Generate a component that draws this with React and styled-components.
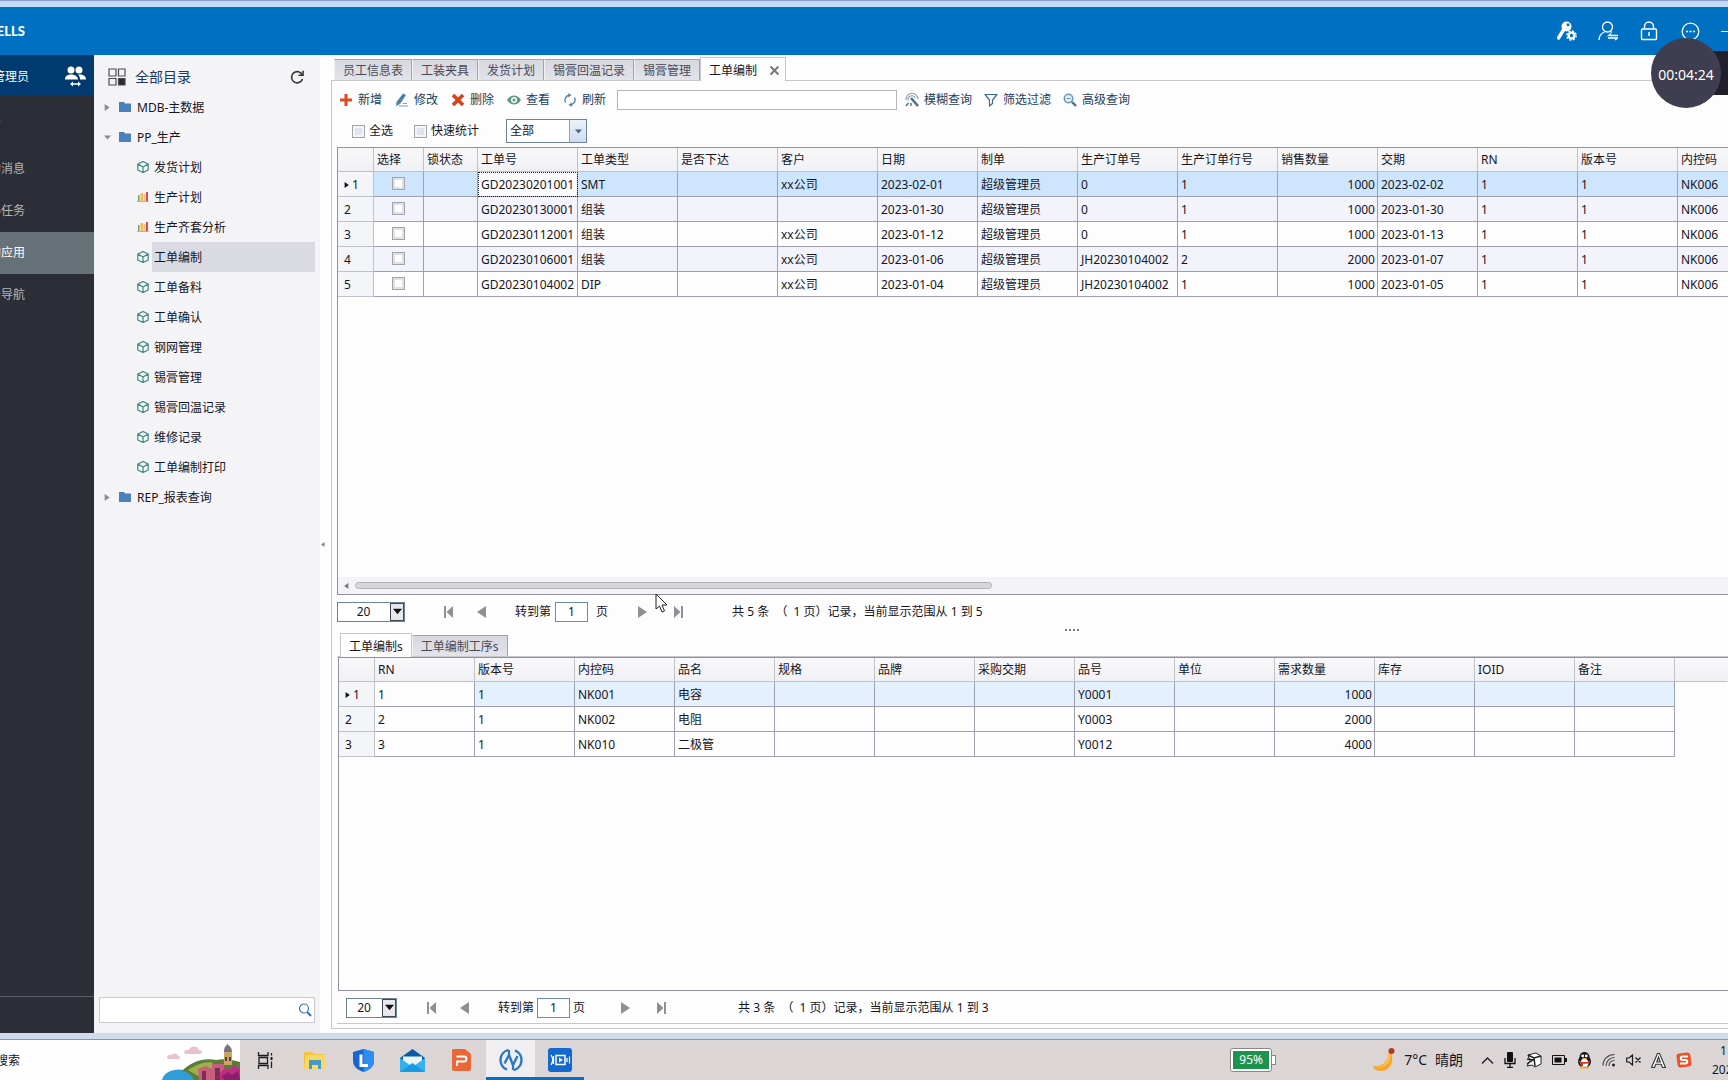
import React from "react";
import styled, { createGlobalStyle, css } from "styled-components";

const GlobalStyle = createGlobalStyle`
  *, *::before, *::after { box-sizing: border-box; }
  body {
    margin: 0;
    overflow: hidden;
    background: #fdfdfd;
    color: #15151f;
    font: 12px/16px "Noto Sans", "Noto Sans CJK SC", sans-serif;
  }
  button, input, select { font: inherit; color: inherit; margin: 0; }
  button { border: 0; padding: 0; background: none; cursor: pointer; }
  a { color: inherit; text-decoration: none; }
  svg { display: block; flex: none; }
`;

const Screen = styled.div`
  display: flex;
  flex-direction: column;
  height: 100vh;
  overflow: hidden;
`;

/* ---------- title bar ---------- */
const WindowEdge = styled.div`
  flex: none;
  height: 7px;
  background: #c4dbf7;
  border-top: 1px solid #8e9ac4;
`;
const TitleBar = styled.header`
  flex: none;
  display: flex;
  align-items: center;
  justify-content: space-between;
  height: 48px;
  background: #0070c3;
  color: #fff;
`;
const Brand = styled.strong`
  display: flex;
  justify-content: flex-end;
  width: 25px;
  overflow: hidden;
  font: 900 13px/20px Lato, "Liberation Sans", sans-serif;
`;
const TitleActions = styled.div`
  display: flex;
  align-items: center;
  gap: 21px;
  margin-right: -13px;
  button { width: 20px; height: 22px; display: grid; place-items: center; color: #fff; }
`;
const TimerDock = styled.div`
  position: absolute;
  top: 38px;
  right: 0;
  width: 77px;
  height: 70px;
  display: flex;
  align-items: center;
  &::before {
    content: "";
    position: absolute;
    right: 0;
    top: 13px;
    width: 30px;
    height: 44px;
    background: #20202c;
  }
`;
const Timer = styled.time`
  position: relative;
  width: 70px;
  height: 70px;
  border-radius: 50%;
  background: #3e3e50;
  color: #fff;
  font-size: 14px;
  line-height: 74px;
  text-align: center;
`;

/* ---------- left navigation ---------- */
const Body = styled.div`
  flex: 1;
  min-height: 0;
  display: flex;
`;
const Side = styled.nav`
  flex: none;
  width: 94px;
  display: flex;
  flex-direction: column;
  overflow: hidden;
  background: #2b2e36;
  color: #b4b6ba;
`;
const UserRow = styled.div`
  display: flex;
  align-items: center;
  justify-content: space-between;
  height: 41px;
  margin-left: -31px;
  padding: 2px 8px 0 0;
  background: #003a6e;
  color: #fff;
  white-space: nowrap;
`;
const SideList = styled.ul`
  flex: 1;
  margin: 10px 0 0;
  padding: 0;
  list-style: none;
`;
const SideLink = styled.a`
  display: block;
  height: 42px;
  margin-left: -23px;
  line-height: 42px;
  white-space: nowrap;
  ${(p) => p.$active && css`background: #667178; color: #fff;`}
`;
const SideFoot = styled.div`
  height: 37px;
  border-top: 1px solid #5b5e65;
`;

/* ---------- tree ---------- */
const TreePanel = styled.aside`
  flex: none;
  width: 226px;
  display: flex;
  flex-direction: column;
  background: #f4f4f7;
`;
const TreeHead = styled.div`
  display: flex;
  align-items: center;
  gap: 9px;
  height: 37px;
  padding: 6px 16px 0 14px;
  color: #23375a;
  font-size: 14px;
  span { flex: 1; }
`;
const TreeList = styled.ul`
  flex: 1;
  margin: 0;
  padding: 0;
  list-style: none;
`;
const TreeItem = styled.li`
  display: flex;
  align-items: center;
  height: 30px;
  padding: 0 5px 0 ${(p) => (p.$child ? 43 : 10)}px;
  svg { margin-right: ${(p) => (p.$child ? 3 : 6)}px; }
  a {
    flex: 1;
    height: 30px;
    padding-left: ${(p) => (p.$child ? 2 : 0)}px;
    line-height: 32px;
    background: ${(p) => (p.$active ? "#dadae2" : "transparent")};
  }
`;
const TreeSearch = styled.label`
  display: flex;
  align-items: center;
  height: 26px;
  margin: 0 5px 10px;
  padding-right: 2px;
  border: 1px solid #c9cbd2;
  background: #fff;
  input { flex: 1; min-width: 0; height: 22px; border: 0; outline: 0; background: none; }
`;
const Collapser = styled.button`
  flex: none;
  width: 11px;
  display: flex;
  align-items: center;
  cursor: default;
`;

/* ---------- work area ---------- */
const Main = styled.main`
  flex: 1;
  min-width: 0;
  display: flex;
  flex-direction: column;
  padding-bottom: 4px;
`;
const TabStrip = styled.div`
  flex: none;
  display: flex;
  align-items: flex-end;
  height: 26px;
  padding-left: 3px;
  border-bottom: 1px solid #c6c6cc;
`;
const Tab = styled.button`
  display: flex;
  align-items: center;
  gap: 12px;
  height: ${(p) => (p.$active ? 24 : 21)}px;
  margin-bottom: ${(p) => (p.$active ? -1 : 0)}px;
  padding: 2px ${(p) => (p.$closable ? 5 : 8)}px 0 8px;
  border: 1px solid ${(p) => (p.$active ? "#c6c6cc" : "#a2a2aa")};
  border-left-color: ${(p) => (p.$active ? "#c6c6cc" : "#f2f2f6")};
  border-bottom: 0;
  background: ${(p) => (p.$active ? "#fdfdfd" : "linear-gradient(#d7d7df, #e3e3ea)")};
  color: ${(p) => (p.$active ? "#15151f" : "#4a4a56")};
  white-space: nowrap;
`;
const Panel = styled.section`
  flex: 1;
  min-height: 0;
  display: flex;
  flex-direction: column;
  padding: 0 0 4px 5px;
  border-left: 1px solid #c6c6cc;
  border-bottom: 1px solid #c6c6cc;
`;
const Toolbar = styled.div`
  flex: none;
  display: flex;
  align-items: center;
  gap: 13px;
  height: 38px;
  padding-left: 2px;
`;
const ToolGroup = styled.div`
  display: flex;
  gap: 12px;
  margin-left: -5px;
`;
const Tool = styled.button`
  display: flex;
  align-items: center;
  gap: 5px;
  color: #24405c;
  white-space: nowrap;
`;
const SearchBox = styled.input`
  width: 280px;
  height: 20px;
  margin-left: -2px;
  border: 1px solid #b4b6be;
  background: #fff;
`;
const Options = styled.div`
  flex: none;
  display: flex;
  align-items: center;
  gap: 21px;
  height: 24px;
  margin-bottom: 4px;
  padding-left: 15px;
`;
const CheckLabel = styled.label`
  display: flex;
  align-items: center;
  gap: 4px;
`;
const Check = styled.input`
  appearance: none;
  display: block;
  width: 13px;
  height: 13px;
  border: 1px solid #a3a4aa;
  background: ${(p) => (p.$muted ? "#dfe3ee" : "#fff")};
  box-shadow: inset 0 0 0 2px ${(p) => (p.$muted ? "#f4f5f8" : "#e0e1e6")};
  &:checked { background: #4f81bd; }
`;
const Combo = styled.span`
  display: grid;
  width: ${(p) => p.$w}px;
  height: ${(p) => p.$h}px;
  border: 1px solid #6c8298;
  background: #fff;
  margin-left: ${(p) => p.$ml || 0}px;
  > * { grid-area: 1 / 1; }
  select {
    appearance: none;
    width: 100%;
    border: 0;
    padding: 0 18px 0 3px;
    outline: 0;
    background: none;
    text-align-last: ${(p) => (p.$center ? "center" : "left")};
  }
`;
const ComboArrow = styled.i`
  justify-self: end;
  display: grid;
  place-items: center;
  width: ${(p) => (p.$dark ? 14 : 17)}px;
  border: ${(p) => (p.$dark ? "1px solid #3d4956" : "0")};
  border-left: 1px solid ${(p) => (p.$dark ? "#3d4956" : "#8ea0bc")};
  background: ${(p) => (p.$dark ? "#e8e8ec" : "linear-gradient(#eaf1fa, #cddcf0)")};
  pointer-events: none;
`;

const GridBox = styled.div`
  flex: ${(p) => p.$grow} 1 0;
  min-height: 0;
  display: flex;
  flex-direction: column;
  justify-content: space-between;
  overflow: hidden;
  margin-left: ${(p) => (p.$inner ? 1 : 0)}px;
  border: solid #8f939c;
  border-width: 1px 0 1px 1px;
`;
const Grid = styled.table`
  flex: none;
  table-layout: fixed;
  width: ${(p) => (p.$w ? p.$w + "px" : "100%")};
  border-collapse: separate;
  border-spacing: 0;
`;
const Th = styled.th`
  height: 24px;
  padding: 0 3px;
  border-right: 1px solid #bfc1cb;
  border-bottom: 1px solid #bfc1cb;
  background: linear-gradient(#f8f8fa, #f1f1f5);
  font-weight: 400;
  text-align: left;
  white-space: nowrap;
  &:last-child { border-right-color: ${(p) => (p.$filler ? "transparent" : "#bfc1cb")}; }
`;
const rowTint = { selected: "#cde6fe", soft: "#e4f0fe", even: "#f3f3fb", plain: "#fdfdfd" };
const Tr = styled.tr`
  background: ${(p) => rowTint[p.$tint]};
`;
const Td = styled.td`
  height: 25px;
  padding: 1px 2px 0 3px;
  border-right: 1px solid #9da0b0;
  border-bottom: 1px solid #9da0b0;
  text-align: ${(p) => (p.$num ? "right" : "left")};
  white-space: nowrap;
  overflow: hidden;
  ${(p) => p.$focus && css`background: #fdfdfd;`}
  ${(p) => p.$dotted && css`outline: 1px dotted #222; outline-offset: -1px;`}
`;
const RowHead = styled.th`
  height: 25px;
  padding: 1px 0 0 6px;
  border-right: 1px solid #bfc1cb;
  border-bottom: 1px solid #bfc1cb;
  background: #f4f5f9;
  font-weight: 400;
  text-align: left;
  span { display: flex; align-items: center; gap: 2px; }
`;
const CheckCell = styled(Td)`
  padding: 0 0 2px 18px;
`;
const EmptyCell = styled.td`
  background: #fdfdfd;
`;
const ScrollTrack = styled.div`
  display: flex;
  align-items: center;
  gap: 6px;
  height: 17px;
  padding-left: 5px;
  background: #f4f4f8;
`;
const ScrollThumb = styled.div`
  width: 46%;
  height: 7px;
  border: 1px solid #b0b0b6;
  border-radius: 4px;
  background: #d6d6dc;
`;

const Pager = styled.div`
  flex: none;
  display: flex;
  align-items: center;
  height: 32px;
  padding-top: 1px;
  padding-left: ${(p) => (p.$inner ? 9 : 0)}px;
  white-space: nowrap;
`;
const PagerNav = styled.div`
  display: flex;
  align-items: center;
  gap: ${(p) => p.$gap}px;
  margin-left: ${(p) => p.$ml}px;
`;
const PageField = styled.label`
  display: flex;
  align-items: center;
  gap: ${(p) => p.$gap}px;
  margin-left: ${(p) => p.$ml}px;
  input {
    width: 33px;
    height: 20px;
    margin: 0 0 0 ${(p) => (p.$gap > 4 ? -4 : 0)}px;
    padding: 0;
    border: 1px solid #6a8ea6;
    background: #fff;
    text-align: center;
  }
`;
const Summary = styled.span`
  margin-left: ${(p) => p.$ml}px;
  white-space: pre;
`;
const Splitter = styled.div`
  flex: none;
  display: flex;
  justify-content: center;
  gap: 2px;
  height: 4px;
  padding: 2px 0 0 78px;
  i { width: 2px; height: 2px; background: #77777c; }
`;
const SubPanel = styled.div`
  flex: ${(p) => p.$grow} 1 0;
  min-height: 0;
  display: flex;
  flex-direction: column;
  border-bottom: 1px solid #c6c6cc;
`;

/* ---------- taskbar ---------- */
const BottomEdge = styled.div`
  flex: none;
  height: 7px;
  background: #d0dbec;
  border-bottom: 1px solid #8497b8;
`;
const Taskbar = styled.footer`
  flex: none;
  display: flex;
  align-items: stretch;
  height: 40px;
  background: #dbd5d6;
  overflow: hidden;
`;
const TaskSearch = styled.div`
  flex: none;
  display: flex;
  align-items: center;
  justify-content: space-between;
  width: 240px;
  background: #fefefe;
  overflow: hidden;
  button { margin-left: -4px; height: 40px; padding-top: 2px; }
`;
const TaskApps = styled.div`
  display: flex;
  flex: 1;
  padding-left: 1px;
`;
const TaskApp = styled.button`
  width: 49px;
  display: grid;
  place-items: center;
  padding-top: ${(p) => (p.$open ? 3 : 0)}px;
  border-bottom: ${(p) => (p.$open ? "3px solid #0f6cbd" : "0")};
  background: ${(p) => (p.$front ? "#f1eef1" : "transparent")};
`;
const Tray = styled.div`
  flex: none;
  display: flex;
  align-items: center;
  gap: 10px;
`;
const Charge = styled.div`
  display: flex;
  align-items: center;
  margin-right: 86px;
  b {
    display: block;
    width: 42px;
    height: 24px;
    padding: 2px;
    border: 1px solid #8a8686;
    border-radius: 3px;
    background: #fff;
  }
  em {
    display: block;
    height: 18px;
    background: #1d9350;
    color: #fff;
    font-style: normal;
    font-weight: 400;
    line-height: 18px;
    text-align: center;
  }
  i { width: 4px; height: 10px; border: 1px solid #8a8686; border-left: 0; background: #fff; }
`;
const Weather = styled.button`
  display: flex;
  align-items: center;
  gap: 8px;
  margin-right: 8px;
  font-size: 14px;
`;
const Clock = styled.time`
  width: 16px;
  margin-left: 10px;
  overflow: hidden;
  white-space: nowrap;
  line-height: 19px;
  span { display: block; padding-left: 8px; }
`;
const Cursor = styled.svg`
  position: absolute;
  left: 655px;
  top: 593px;
  pointer-events: none;
`;

/* ---------- drawings ---------- */
const S = ({ w = 14, h = w, vb, children, ...r }) => (
  <svg width={w} height={h} viewBox={vb || `0 0 ${w} ${h}`} fill="none" aria-hidden="true" {...r}>{children}</svg>
);
const Triangle = ({ dir = "right", size = 5, color = "#777" }) => {
  const d = { right: "M1 0v10l7-5z", left: "M9 0v10L2 5z", down: "M0 2h10L5 8z" }[dir];
  return <S w={size} vb="0 0 10 10"><path d={d} fill={color} /></S>;
};
const Folder = () => (
  <S w={12}><path d="M0 1h5l1 1.500h6V11H0z" fill="#4a80bd" /></S>
);
const Cube = () => (
  <S w={12} stroke="#3f8784" strokeWidth="1.200" strokeLinejoin="round"><path d="M6 .5 11.200 3v6L6 11.500.8 9V3zM.8 3 6 6l5.200-3M6 6v5.300" /></S>
);
const Bars = () => (
  <S w={12}>
    <path d="M1 4h1.500v6H1z" fill="#6ba37a" /><path d="M3.500 2H6v8H3.500z" fill="#f2bd4a" />
    <path d="M6.500 3h2v7h-2z" fill="#f6b98a" /><path d="M9 1h2v9H9z" fill="#c9524a" />
    <path d="M0 10.500h12" stroke="#b6b0a8" />
  </S>
);
const People = () => (
  <S w={21} fill="#fff">
    <circle cx="6" cy="4" r="3.500" /><circle cx="14" cy="4" r="3.500" />
    <path d="M0 13.500c0-3.500 2.500-5 6-5s7 1.500 7 5zM13 8.800c4-.8 8 .8 8 4.700h-6c0-2-.5-3.500-2-4.700z" />
    <path d="M5 18l3-2.500v1.700h5v-1.700l3 2.500-3 2.500v-1.700H8v1.700z" />
  </S>
);
const Catalog = () => (
  <S w={18} stroke="#4a4a52" strokeWidth="1.200"><path d="M1 1h7v7H1zM10.500 1H17v7h-6.500zM1 10.500h7V17H1z" /><path d="M10.500 10.500H17V17h-6.500z" fill="#2b2b31" /></S>
);
const Reload = () => (
  <S w={14} stroke="#333" strokeWidth="1.600"><path d="M12.300 5A5.600 5.600 0 1 0 12.500 9" /><path d="M13 .8v4.500H8.500" /></S>
);
const Magnifier = () => (
  <S w={14} stroke="#3d73a6"><circle cx="6" cy="5.500" r="4.500" strokeWidth="1.200" /><path d="M9 9l4 4" strokeWidth="2.200" /></S>
);
const Plus = () => <S><path d="M5.500 1h3v4.500H13v3H8.500V13h-3V8.500H1v-3h4.500z" fill="#db4a22" /></S>;
const Pencil = () => (
  <S><path d="M8 .5l3 1.500L5 11l-4 2 .5-4z" fill="#4d7fa8" /><path d="M4 13h9M8 10.500h4" stroke="#7aa0bf" strokeWidth="1.200" /></S>
);
const Cross = ({ size = 14, color = "#d8431c", width = 3.6 }) => (
  <S w={size} vb="0 0 14 14"><path d="M2 2l10 10M12 2L2 12" stroke={color} strokeWidth={width} /></S>
);
const Eye = () => (
  <S><path d="M0 7c3.500-6 10.500-6 14 0-3.500 6-10.500 6-14 0z" fill="#5f9a84" /><circle cx="7" cy="7" r="3" fill="#fff" /><circle cx="7" cy="7" r="1.500" fill="#5f9a84" /></S>
);
const Sync = () => (
  <S stroke="#4c83ad" strokeWidth="1.400"><path d="M2.500 9.500A5 5 0 0 1 6 2.200M11.500 4.500A5 5 0 0 1 8 11.800" /><path d="M5 .2l3.500 1.800L5.500 4.500zM9 13.800l-3.500-1.800 3-2.500z" fill="#4c83ad" stroke="none" /></S>
);
const Wand = () => (
  <S stroke="#4f7288"><path d="M1 7a6 6 0 0 1 12-1M3 7.500a4 4 0 0 1 7.500-2.500" stroke="#8fa6b3" strokeWidth="1.200" /><path d="M6 5l7 8" strokeWidth="2.600" /><path d="M1 13l2.500-3M6 10v3" strokeWidth="1.500" /></S>
);
const Funnel = () => <S stroke="#3a6f93" strokeWidth="1.200"><path d="M1 1.500h12L8.500 7v3.500L5.500 13V7z" strokeLinejoin="round" /></S>;
const ZoomMinus = () => (
  <S stroke="#6696b8"><circle cx="5.500" cy="5.500" r="4.200" strokeWidth="1.500" fill="#e3eef6" /><path d="M3.500 5.500h4" /><path d="M9 9l4 4" stroke="#4b7089" strokeWidth="2.400" /></S>
);
const KeyGear = () => (
  <S w={20}>
    <circle cx="9.500" cy="5.500" r="5" fill="#fff" /><circle cx="11" cy="3.800" r="1.500" fill="#0070c3" />
    <path d="M7 8L1.500 17" stroke="#fff" strokeWidth="3.400" strokeLinecap="round" />
    <circle cx="14.500" cy="14.500" r="5" fill="#0070c3" />
    <circle cx="14.500" cy="14.500" r="2.800" stroke="#fff" strokeWidth="2.200" />
    <circle cx="14.500" cy="14.500" r="4.600" stroke="#fff" strokeWidth="1.500" strokeDasharray="2 1.600" />
  </S>
);
const UserSwap = () => (
  <S w={20} stroke="#fff" strokeWidth="1.300"><circle cx="9.500" cy="6" r="5" /><path d="M1 19c0-4 2-6.500 5.500-8M12.500 10.500l1.500 1M20 14.500h-9.500l2.500-2M10 17h9.500L17 19" /></S>
);
const Lock = () => (
  <S w={18} h={20} stroke="#fff" strokeWidth="1.400"><rect x="1.500" y="8" width="15" height="10.500" rx="1" /><path d="M4.500 8V5.500a4.500 4.500 0 0 1 9 0V8M9 11v4" /></S>
);
const Dots = () => (
  <S w={19} stroke="#fff" strokeWidth="1.300"><circle cx="9.500" cy="9.500" r="8.300" /><path d="M5 9.500h2M8.500 9.500h2M12 9.500h2" strokeWidth="1.600" /></S>
);
const Minus = () => <S w={20}><path d="M0 10.500h20" stroke="#fff" /></S>;
const First = () => <S w={9} h={12} fill="#8f8f94"><path d="M0 0h2v12H0zM9 0v12L2.500 6z" /></S>;
const Prev = () => <S w={9} h={12} fill="#8f8f94"><path d="M9 0v12L0 6z" /></S>;
const Next = () => <S w={9} h={12} fill="#8f8f94"><path d="M0 0v12l9-6z" /></S>;
const Last = () => <S w={9} h={12} fill="#8f8f94"><path d="M7 0h2v12H7zM0 0v12l6.500-6z" /></S>;

const Scenery = () => (
  <S w={78} h={40}>
    <path d="M5 18c0-3 3-4 5-3 2-3 6-1 6 1 2 0 3 2 1 3H6zM22 13c0-3 3-4 5-3 2-5 9-4 10 0 4 0 4 4 1 4H24z" fill="#e7c3ca" />
    <path d="M0 40c3-14 30-14 36 0z" fill="#2f9dd6" />
    <path d="M20 31c8-9 22-14 34-11 8-2 18 0 24 2v18H32c-2-5-6-8-12-9z" fill="#5c7d38" />
    <path d="M26 30c8-5 14-8 24-8l4 8-18 6z" fill="#9fae45" />
    <path d="M36 29l8-3 6 3v11H37zM50 24h12v16H50z" fill="#c75f7c" />
    <path d="M40 31h4v9h-4zM53 28h5v12h-5z" fill="#7d2c58" />
    <path d="M62 15c0-5 1-7 3-8 3 1 5 3 5 8v10h-8z" fill="#c8a566" />
    <path d="M62 12c0-4 1-6 3-7V4h1v1c2 1 4 3 4 7z" fill="#77747e" />
    <path d="M63 17h2v4h-2zM67 17h2v4h-2z" fill="#5e3b34" />
    <path d="M58 33l6-6 3 3 5-5 6 4v11H58z" fill="#c12b86" />
    <path d="M60 36l6-4 4 3 6-4 2 9H62z" fill="#8a1f6c" />
  </S>
);
const TaskView = () => (
  <S w={17} stroke="#1c1c1c" strokeWidth="1.300"><path d="M1.500 0v3.500H11V0M1.500 17v-3.500H11V17M2 5.500h8.500v6H2zM14.500 1v2.500M14.500 9.500V16" /><path d="M13.500 5h2v3h-2z" fill="#1c1c1c" stroke="none" /></S>
);
const Explorer = () => (
  <S w={22}><path d="M0 3h8l2 2h10v15H0z" fill="#f4c43f" /><path d="M2 6h20v14H0z" fill="#fbd766" /><path d="M5 11h12v9h-3v-4H8v4H5z" fill="#459bc4" /></S>
);
const Shield = () => (
  <S w={23}><path d="M11.500 0L22 3v9c0 6-5 9-10.500 11C6 21 1 18 1 12V3z" fill="#1565d2" /><path d="M11.500 0L22 3v9c0 6-5 9-10.500 11z" fill="#2f8df2" /><path d="M9 5.500v11h7" stroke="#fff" strokeWidth="3" /></S>
);
const Mail = () => (
  <S w={25} h={23}><path d="M0 9L12.500 0 25 9v14H0z" fill="#0c5aa6" /><path d="M3 7.500h19v9H3z" fill="#e9f4fc" /><path d="M0 9l12.500 9L25 9v14H0z" fill="#35b1ee" /><path d="M0 23l12.500-9L25 23z" fill="#1a9be2" /></S>
);
const SlidesApp = () => (
  <S w={19} h={22}><path d="M1 0h12l6 5v15a2 2 0 0 1-2 2H2a2 2 0 0 1-2-2V1z" fill="#e9683a" /><path d="M5 17V12.500h7a2.500 2.500 0 0 0 0-5H4.500" stroke="#fff" strokeWidth="1.800" /></S>
);
const Meeting = () => (
  <S w={24} stroke="#2b78c9"><path d="M14.500 22.200A10.500 10.500 0 0 0 16 2.300M9.500 1.800A10.500 10.500 0 0 0 8 21.700" strokeWidth="2.400" /><path d="M5.500 15.500L10 7l4 10 4.500-9" strokeWidth="2.400" strokeLinejoin="bevel" /><path d="M10 2v6M14 16v6" strokeWidth="2.200" /></S>
);
const Recorder = () => (
  <S w={24}><rect width="24" height="24" rx="3" fill="#1469cf" /><path d="M8 7.500h9v9H8z" stroke="#fff" strokeWidth="1.500" /><path d="M11 9.500v5l4-2.500z" fill="#fff" /><path d="M3 7c2 3 2 7 0 10M5.500 8v8M19 10v4M21.500 8.500v7" stroke="#fff" strokeWidth="1.200" /></S>
);
const Moon = () => (
  <S w={24}><path d="M17 2c7 9 2 21-8 21-4 0-7-2-8.500-5C10 20 17 13 17 2z" fill="#f5a52c" /><path d="M17 4c4 7-2 16-12 16C12 18 17 13 17 4z" fill="#fbc552" /><circle cx="19.500" cy="3" r="3" fill="#b5382a" /></S>
);
const Up = () => <S w={13} stroke="#222" strokeWidth="1.400"><path d="M1 9.500L6.500 4 12 9.500" /></S>;
const Mic = () => <S w={12} h={16} stroke="#111"><rect x="3" y="0" width="6" height="10" rx="1" fill="#111" stroke="none" /><path d="M1 6v5.500h10V6M6 11.500V15M3 15.400h6" strokeWidth="1.300" /></S>;
const Device = () => (
  <S w={16}><path d="M2 3l8-2 5 3v8l-6 3-3-2-5 1 3-5z" fill="#fff" stroke="#222" /><path d="M2 3l6 3 7-2M1 7l7 1M8 6l1 8M1 12l6-4" stroke="#222" strokeWidth="1.500" /></S>
);
const Cell = () => <S w={15} h={10}><path d="M.5.500h12v9H.500z" stroke="#111" /><path d="M2.500 2.500h7v5h-7zM13 3h2v4h-2z" fill="#111" /></S>;
const Penguin = () => (
  <S w={15} h={17}><ellipse cx="7.500" cy="9.500" rx="6.500" ry="6.500" fill="#15151a" /><ellipse cx="7.500" cy="5" rx="5" ry="5" fill="#15151a" /><ellipse cx="7.500" cy="11" rx="4" ry="4.500" fill="#fff" /><circle cx="5.700" cy="4" r="1.400" fill="#fff" /><circle cx="9.300" cy="4" r="1.400" fill="#fff" /><path d="M5 6h5l-2.500 1.500z" fill="#f4a921" /><path d="M2 8.500c3 2 8 2 11 0v2c-3 1.500-6 1.500-7 1.200V14H4v-3L2 10.500z" fill="#d92f2b" /><path d="M3 15.500h4M8 15.500h4" stroke="#f4a921" strokeWidth="2" /></S>
);
const Wifi = () => <S w={14} stroke="#4a4648" strokeWidth="1.200"><path d="M1 12.500C1 6 6 1.500 12.500 1.500M4 13c0-5 4-8.500 8.500-8.500M7 13c0-3.500 2.500-5.500 5.500-5.500" /><circle cx="11.500" cy="12" r="1.500" fill="#222" stroke="none" /></S>;
const Muted = () => <S w={15} h={12} stroke="#1c1c1c" strokeWidth="1.200"><path d="M.7 4H3l3.500-3v10L3 8H.7zM9.500 3.500l5 5M14.500 3.500l-5 5" /></S>;
const InputMode = () => <S w={15} h={15} stroke="#333"><path d="M6.500.5h2l6 14h-3l-1.300-3.200H4.800L3.500 14.500h-3zM7.500 4L5.700 9h3.600z" strokeWidth="1.100" fill="#fff" /></S>;
const Sogou = () => <S w={16}><rect x="1" y="1" width="14" height="14" rx="3" fill="#ec5228" transform="rotate(-8 8 8)" /><path d="M12 4.500H6.500a1.700 1.700 0 0 0 0 3.500h3a1.700 1.700 0 0 1 0 3.500H4" stroke="#fff" strokeWidth="2" /></S>;

/* ---------- data ---------- */
const sideItems = ["首页", "我的消息", "待办任务", "我的应用", "业务导航"];
const treeItems = [
  ["MDB-主数据", "folder", "right"], ["PP_生产", "folder", "down"],
  ["发货计划", "cube"], ["生产计划", "bars"], ["生产齐套分析", "bars"], ["工单编制", "cube"],
  ["工单备料", "cube"], ["工单确认", "cube"], ["钢网管理", "cube"], ["锡膏管理", "cube"],
  ["锡膏回温记录", "cube"], ["维修记录", "cube"], ["工单编制打印", "cube"],
  ["REP_报表查询", "folder", "right"],
];
const tabs = ["员工信息表", "工装夹具", "发货计划", "锡膏回温记录", "锡膏管理"];
const tools = [["新增", Plus], ["修改", Pencil], ["删除", Cross], ["查看", Eye], ["刷新", Sync]];
const queries = [["模糊查询", Wand], ["筛选过滤", Funnel], ["高级查询", ZoomMinus]];

const orderCols = ["工单号", "工单类型", "是否下达", "客户", "日期", "制单", "生产订单号", "生产订单行号", "销售数量", "交期", "RN", "版本号", "内控码"];
const orders = [
  ["GD20230201001", "SMT", "", "xx公司", "2023-02-01", "超级管理员", "0", "1", "1000", "2023-02-02", "1", "1", "NK006"],
  ["GD20230130001", "组装", "", "", "2023-01-30", "超级管理员", "0", "1", "1000", "2023-01-30", "1", "1", "NK006"],
  ["GD20230112001", "组装", "", "xx公司", "2023-01-12", "超级管理员", "0", "1", "1000", "2023-01-13", "1", "1", "NK006"],
  ["GD20230106001", "组装", "", "xx公司", "2023-01-06", "超级管理员", "JH20230104002", "2", "2000", "2023-01-07", "1", "1", "NK006"],
  ["GD20230104002", "DIP", "", "xx公司", "2023-01-04", "超级管理员", "JH20230104002", "1", "1000", "2023-01-05", "1", "1", "NK006"],
];
const partCols = ["RN", "版本号", "内控码", "品名", "规格", "品牌", "采购交期", "品号", "单位", "需求数量", "库存", "IOID", "备注"];
const parts = [
  ["1", "1", "NK001", "电容", "", "", "", "Y0001", "", "1000", "", "", ""],
  ["2", "1", "NK002", "电阻", "", "", "", "Y0003", "", "2000", "", "", ""],
  ["3", "1", "NK010", "二极管", "", "", "", "Y0012", "", "4000", "", "", ""],
];

function PageSize({ width }) {
  return (
    <Combo $w={width} $h={20} $center>
      <select aria-label="每页条数" defaultValue="20"><option>20</option></select>
      <ComboArrow $dark><Triangle dir="down" size={9} color="#111" /></ComboArrow>
    </Combo>
  );
}

function PagerBar({ inner, total }) {
  return (
    <Pager $inner={inner}>
      <PageSize width={inner ? 51 : 68} />
      <PagerNav $ml={inner ? 30 : 39} $gap={24}>
        <button aria-label="首页"><First /></button>
        <button aria-label="上一页"><Prev /></button>
      </PagerNav>
      <PageField $ml={29} $gap={inner ? 3 : 8}>
        转到第 <input defaultValue="1" /> 页
      </PageField>
      <PagerNav $ml={inner ? 36 : 30} $gap={27}>
        <button aria-label="下一页"><Next /></button>
        <button aria-label="末页"><Last /></button>
      </PagerNav>
      <Summary $ml={inner ? 72 : 49}>{`共 ${total} 条  （  1 页）记录，当前显示范围从 1 到 ${total}`}</Summary>
    </Pager>
  );
}

function RowNumber({ n }) {
  return (
    <RowHead scope="row">
      <span>{n === 1 && <Triangle size={6} color="#111" />}{n}</span>
    </RowHead>
  );
}

function OrdersGrid() {
  return (
    <Grid $w={1440}>
      <colgroup>
        <col style={{ width: 36 }} /><col style={{ width: 50 }} /><col style={{ width: 54 }} />
        {orderCols.map((c) => <col key={c} style={{ width: 100 }} />)}
      </colgroup>
      <thead><tr><Th /><Th>选择</Th><Th>锁状态</Th>{orderCols.map((c) => <Th key={c}>{c}</Th>)}</tr></thead>
      <tbody>
        {orders.map((row, i) => (
          <Tr key={row[0]} $tint={i === 0 ? "selected" : i % 2 ? "even" : "plain"}>
            <RowNumber n={i + 1} />
            <CheckCell><Check type="checkbox" aria-label={`选择 ${row[0]}`} /></CheckCell>
            <Td />
            {row.map((v, c) => <Td key={c} $num={c === 8} $focus={i === 0 && c === 0} $dotted={i === 0 && c === 0}>{v}</Td>)}
          </Tr>
        ))}
      </tbody>
    </Grid>
  );
}

function PartsGrid() {
  return (
    <Grid>
      <colgroup>
        <col style={{ width: 36 }} />
        {partCols.map((c) => <col key={c} style={{ width: 100 }} />)}
        <col />
      </colgroup>
      <thead><tr><Th />{partCols.map((c) => <Th key={c}>{c}</Th>)}<Th $filler /></tr></thead>
      <tbody>
        {parts.map((row, i) => (
          <Tr key={row[0]} $tint={i === 0 ? "soft" : "plain"}>
            <RowNumber n={i + 1} />
            {row.map((v, c) => <Td key={c} $num={c === 9} $focus={i === 0 && c === 0}>{v}</Td>)}
            <EmptyCell />
          </Tr>
        ))}
      </tbody>
    </Grid>
  );
}

const treeIcons = { folder: Folder, cube: Cube, bars: Bars };

export default function App() {
  return (
    <Screen>
      <GlobalStyle />
      <WindowEdge />
      <TitleBar>
        <Brand>ELLS</Brand>
        <TitleActions>
          <button aria-label="权限设置"><KeyGear /></button>
          <button aria-label="切换用户"><UserSwap /></button>
          <button aria-label="锁定"><Lock /></button>
          <button aria-label="更多"><Dots /></button>
          <button aria-label="最小化"><Minus /></button>
        </TitleActions>
      </TitleBar>

      <Body>
        <Side>
          <UserRow>超级管理员<People /></UserRow>
          <SideList>
            {sideItems.map((t) => <li key={t}><SideLink href="#" $active={t === "我的应用"}>{t}</SideLink></li>)}
          </SideList>
          <SideFoot />
        </Side>

        <TreePanel>
          <TreeHead><Catalog /><span>全部目录</span><button aria-label="刷新目录"><Reload /></button></TreeHead>
          <TreeList>
            {treeItems.map(([label, icon, arrow]) => {
              const Icon = treeIcons[icon];
              return (
                <TreeItem key={label} $child={!arrow} $active={label === "工单编制"}>
                  {arrow && <Triangle dir={arrow} size={7} color="#8a8a8e" />}
                  {arrow && <span style={{ width: 2 }} />}
                  <Icon /><a href="#">{label}</a>
                </TreeItem>
              );
            })}
          </TreeList>
          <TreeSearch><input aria-label="搜索目录" /><Magnifier /></TreeSearch>
        </TreePanel>
        <Collapser aria-label="收起目录"><Triangle dir="left" size={5} color="#888" /></Collapser>

        <Main>
          <TabStrip>
            {tabs.map((t) => <Tab key={t}>{t}</Tab>)}
            <Tab $active $closable>工单编制<Cross size={11} color="#77777e" width={2.6} /></Tab>
          </TabStrip>
          <Panel>
            <Toolbar>
              {tools.map(([t, Icon]) => <Tool key={t}><Icon />{t}</Tool>)}
              <SearchBox aria-label="查询内容" />
              <ToolGroup>{queries.map(([t, Icon]) => <Tool key={t}><Icon />{t}</Tool>)}</ToolGroup>
            </Toolbar>
            <Options>
              <CheckLabel><Check type="checkbox" $muted />全选</CheckLabel>
              <CheckLabel><Check type="checkbox" $muted />快速统计</CheckLabel>
              <Combo $w={81} $h={24} $ml={6}>
                <select aria-label="范围" defaultValue="全部"><option>全部</option></select>
                <ComboArrow><Triangle dir="down" size={7} color="#4e617c" /></ComboArrow>
              </Combo>
            </Options>
            <GridBox $grow={448}>
              <OrdersGrid />
              <ScrollTrack><Triangle dir="left" size={6} /><ScrollThumb /></ScrollTrack>
            </GridBox>
            <PagerBar total={5} />
            <Splitter><i /><i /><i /><i /></Splitter>
            <SubPanel $grow={393}>
              <TabStrip><Tab $active>工单编制s</Tab><Tab>工单编制工序s</Tab></TabStrip>
              <GridBox $grow={1} $inner><PartsGrid /></GridBox>
              <PagerBar inner total={3} />
            </SubPanel>
          </Panel>
        </Main>
      </Body>

      <BottomEdge />
      <Taskbar>
        <TaskSearch><button>搜索</button><Scenery /></TaskSearch>
        <TaskApps>
          <TaskApp aria-label="任务视图"><TaskView /></TaskApp>
          <TaskApp aria-label="文件资源管理器"><Explorer /></TaskApp>
          <TaskApp aria-label="安全卫士"><Shield /></TaskApp>
          <TaskApp aria-label="邮件"><Mail /></TaskApp>
          <TaskApp aria-label="演示文稿"><SlidesApp /></TaskApp>
          <TaskApp aria-label="工作台" $open $front><Meeting /></TaskApp>
          <TaskApp aria-label="录屏" $open><Recorder /></TaskApp>
        </TaskApps>
        <Tray>
          <Charge><b><em>95%</em></b><i /></Charge>
          <Weather><Moon />7°C<span>晴朗</span></Weather>
          <Up /><Mic /><Device /><Cell /><Penguin /><Wifi /><Muted /><InputMode /><Sogou />
          <Clock><span>1</span>202</Clock>
        </Tray>
      </Taskbar>

      <TimerDock><Timer>00:04:24</Timer></TimerDock>
      <Cursor width="13" height="20" viewBox="0 0 13 20" aria-hidden="true">
        <path d="M1 1v15l3.500-3 2.500 6 2.500-1L7 12h5z" fill="#fff" stroke="#222" />
      </Cursor>
    </Screen>
  );
}
